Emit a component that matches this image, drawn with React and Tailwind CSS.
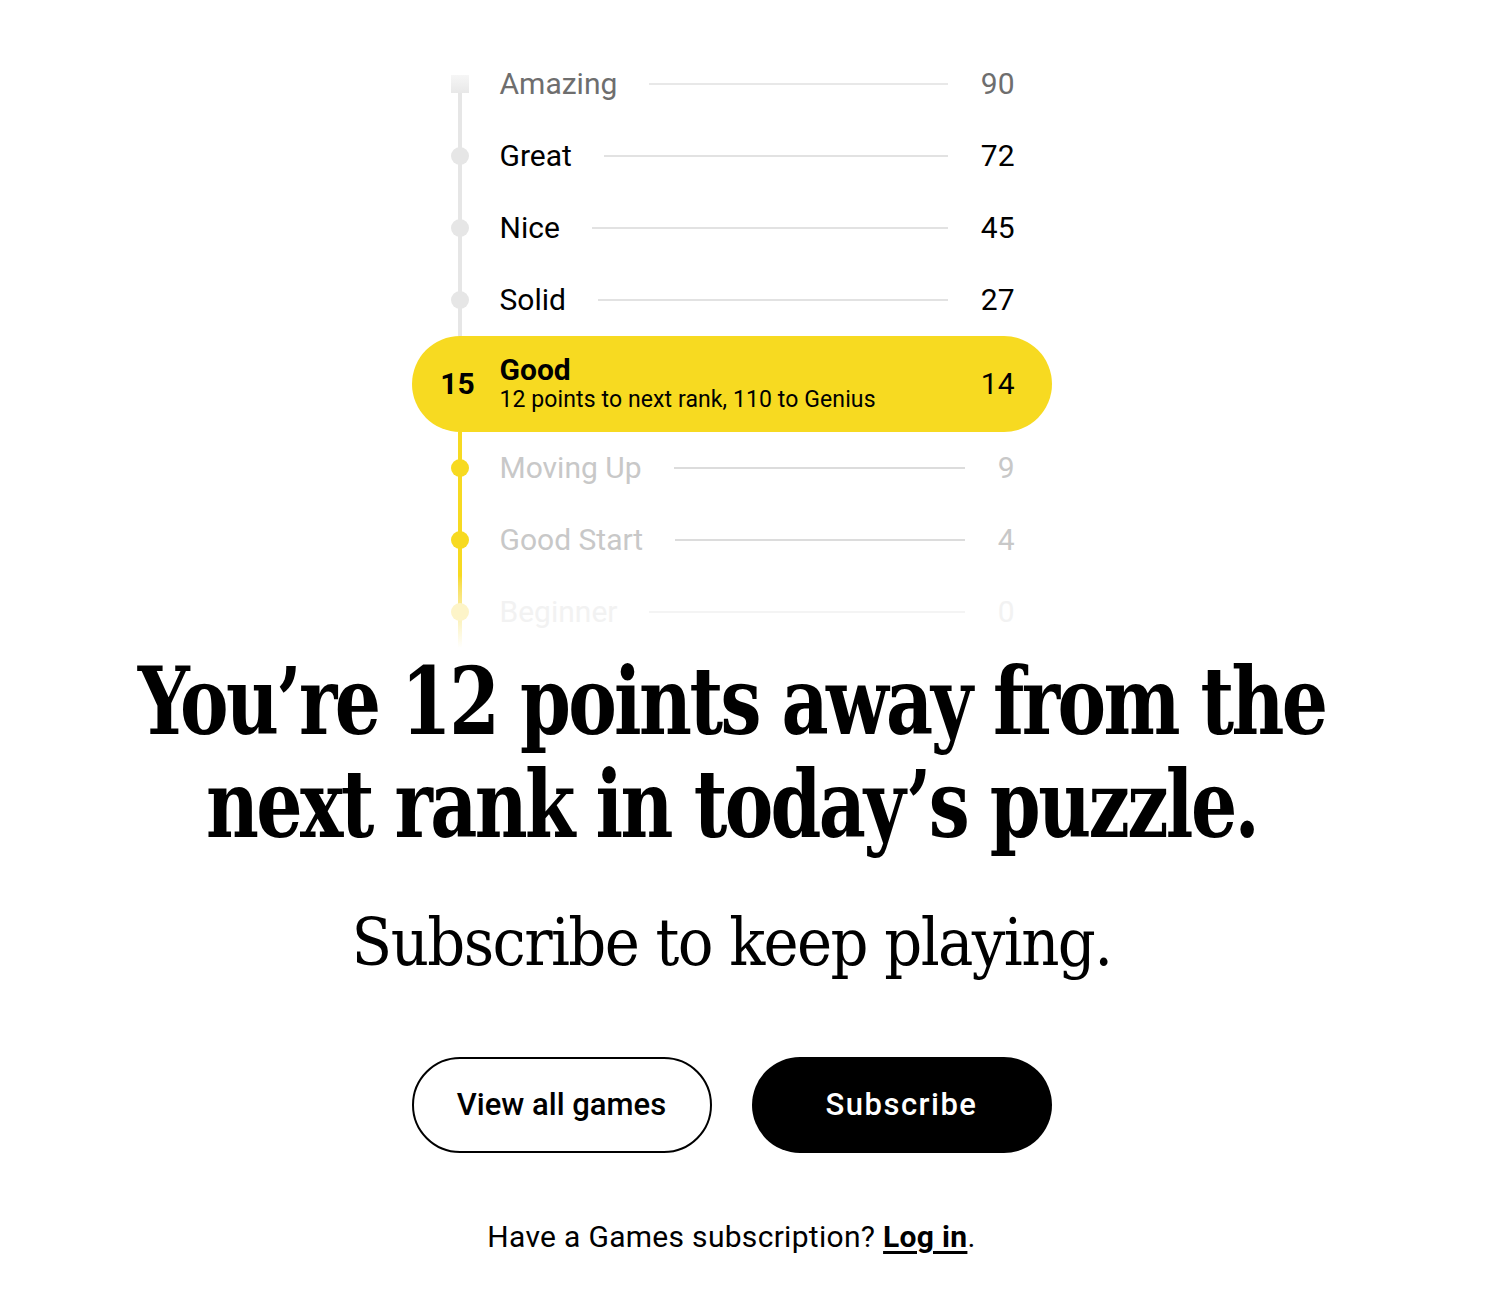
import React from "react";

const sans = { fontFamily: "Roboto, 'Liberation Sans', sans-serif" };
const slab = { fontFamily: "'DejaVu Serif Condensed', 'DejaVu Serif', serif" };

function Row({ label, value, labelClass, lineClass, dot, segTop, segClass }) {
  return (
    <div className="flex items-center h-[72px] pr-[37px]">
      <div className="relative w-[88px] h-full flex-none">
        <div className={`absolute left-[46px] w-[4px] ${segTop ? "top-1/2 bottom-0" : "top-0 bottom-0"} ${segClass}`} />
        <div className="absolute left-[39px] top-1/2 -translate-y-1/2">{dot}</div>
      </div>
      <span className={`text-[30px] leading-none ${labelClass}`}>{label}</span>
      <div className={`flex-1 h-[2px] ml-[32px] mr-[33px] ${lineClass}`} />
      <span className={`text-[30px] leading-none ${labelClass}`}>{value}</span>
    </div>
  );
}

const grayDot = <div className="w-[18px] h-[18px] rounded-full bg-[#e6e6e6]" />;
const yellowDot = <div className="w-[18px] h-[18px] rounded-full bg-[#f7da21]" />;

export default function App() {
  return (
    <div className="w-[1463px] bg-white text-black flex flex-col items-center pt-[48px] pb-[40px]" style={sans}>
      <div className="w-[640px] flex flex-col">
        <Row
          label="Amazing"
          value="90"
          labelClass="text-[#6e6e6e]"
          lineClass="bg-[#e8e8e8]"
          segTop
          segClass="bg-[#e6e6e6]"
          dot={<div className="w-[18px] h-[18px] bg-gradient-to-b from-[#f6f6f6] to-[#e8e8e8]" />}
        />
        <Row label="Great" value="72" labelClass="text-black" lineClass="bg-[#e2e2e2]" segClass="bg-[#e6e6e6]" dot={grayDot} />
        <Row label="Nice" value="45" labelClass="text-black" lineClass="bg-[#e2e2e2]" segClass="bg-[#e6e6e6]" dot={grayDot} />
        <Row label="Solid" value="27" labelClass="text-black" lineClass="bg-[#e2e2e2]" segClass="bg-[#e6e6e6]" dot={grayDot} />
        <div className="h-[96px] rounded-full bg-[#f7da21] flex items-center pr-[37px]">
          <div className="w-[88px] flex-none flex justify-center pl-[14px] pr-[10px]">
            <span className="text-[30px] font-bold leading-none">15</span>
          </div>
          <div className="flex-1 flex flex-col pt-[2px]">
            <span className="text-[30px] font-bold leading-[30px]">Good</span>
            <span className="text-[23px] leading-[30px] tracking-[0.1px]">12 points to next rank, 110 to Genius</span>
          </div>
          <span className="text-[30px] leading-none">14</span>
        </div>
        <Row label="Moving Up" value="9" labelClass="text-[#c8c8c8]" lineClass="bg-[#dcdcdc]" segClass="bg-[#f7da21]" dot={yellowDot} />
        <Row label="Good Start" value="4" labelClass="text-[#c8c8c8]" lineClass="bg-[#dcdcdc]" segClass="bg-[#f7da21]" dot={yellowDot} />
        <Row
          label="Beginner"
          value="0"
          labelClass="text-[#f2f2f2]"
          lineClass="bg-[#f4f4f4]"
          segClass="bg-gradient-to-b from-[#f7da21] to-white"
          dot={<div className="w-[18px] h-[18px] rounded-full bg-[#fdf4c8]" />}
        />
      </div>

      <h1
        className="mt-[2px] text-center text-[94px] font-bold leading-[103px] tracking-[-3px] scale-x-[0.86] whitespace-nowrap"
        style={slab}
      >
        You’re 12 points away from the
        <br />
        next rank in today’s puzzle.
      </h1>

      <p className="mt-[54px] text-[66px] leading-none tracking-[-1.6px]" style={slab}>
        Subscribe to keep playing.
      </p>

      <div className="mt-[81px] flex gap-[40px]">
        <button className="w-[300px] h-[96px] rounded-full border-2 border-black bg-white text-[31px] font-medium">
          View all games
        </button>
        <button className="w-[300px] h-[96px] rounded-full bg-black text-white text-[31px] font-medium tracking-[1.5px]">
          Subscribe
        </button>
      </div>

      <p className="mt-[69px] text-[30px] leading-none tracking-[0.3px]">
        Have a Games subscription? <a className="font-bold underline underline-offset-4">Log in</a>.
      </p>
    </div>
  );
}
